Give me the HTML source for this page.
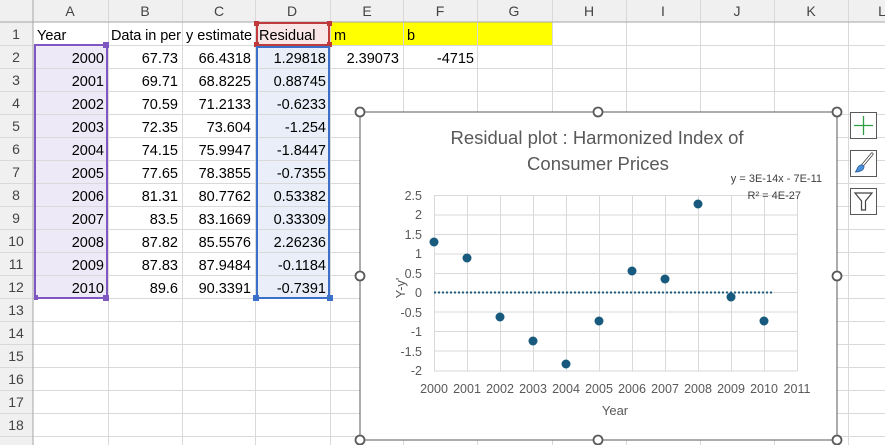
<!DOCTYPE html>
<html><head><meta charset="utf-8"><style>
html,body{margin:0;padding:0;background:#fff;overflow:hidden}
svg{display:block}
text{font-family:"Liberation Sans",Arial,sans-serif}
</style></head><body>
<svg width="885" height="445" xmlns="http://www.w3.org/2000/svg">
<rect width="885" height="445" fill="#fff"/>
<!-- header backgrounds -->
<rect x="0" y="0" width="885" height="22" fill="#f0f0f0"/>
<rect x="0" y="0" width="33" height="445" fill="#f0f0f0"/>
<!-- selection fills -->
<rect x="33" y="45" width="75" height="253" fill="#ede9f6"/>
<rect x="255" y="45" width="75" height="253" fill="#e9eef8"/>
<rect x="255" y="22" width="75" height="23" fill="#f9e6e6"/>
<rect x="330" y="22" width="222" height="23" fill="#ffff00"/>
<!-- grid -->
<g stroke="#d9d9d9" stroke-width="1">
<line x1="108.5" y1="0" x2="108.5" y2="445"/><line x1="182.5" y1="0" x2="182.5" y2="445"/>
<line x1="255.5" y1="0" x2="255.5" y2="445"/><line x1="330.5" y1="0" x2="330.5" y2="445"/>
<line x1="403.5" y1="0" x2="403.5" y2="445"/><line x1="477.5" y1="0" x2="477.5" y2="445"/>
<line x1="552.5" y1="0" x2="552.5" y2="445"/><line x1="626.5" y1="0" x2="626.5" y2="445"/>
<line x1="700.5" y1="0" x2="700.5" y2="445"/><line x1="774.5" y1="0" x2="774.5" y2="445"/>
<line x1="848.5" y1="0" x2="848.5" y2="445"/>
<line x1="0" y1="45.5" x2="885" y2="45.5"/><line x1="0" y1="68.5" x2="885" y2="68.5"/>
<line x1="0" y1="91.5" x2="885" y2="91.5"/><line x1="0" y1="114.5" x2="885" y2="114.5"/>
<line x1="0" y1="137.5" x2="885" y2="137.5"/><line x1="0" y1="160.5" x2="885" y2="160.5"/>
<line x1="0" y1="183.5" x2="885" y2="183.5"/><line x1="0" y1="206.5" x2="885" y2="206.5"/>
<line x1="0" y1="229.5" x2="885" y2="229.5"/><line x1="0" y1="252.5" x2="885" y2="252.5"/>
<line x1="0" y1="275.5" x2="885" y2="275.5"/><line x1="0" y1="298.5" x2="885" y2="298.5"/>
<line x1="0" y1="321.5" x2="885" y2="321.5"/><line x1="0" y1="344.5" x2="885" y2="344.5"/>
<line x1="0" y1="367.5" x2="885" y2="367.5"/><line x1="0" y1="390.5" x2="885" y2="390.5"/>
<line x1="0" y1="413.5" x2="885" y2="413.5"/><line x1="0" y1="436.5" x2="885" y2="436.5"/>
</g>
<line x1="0" y1="22" x2="885" y2="22" stroke="#a6a6a6"/>
<line x1="33" y1="0" x2="33" y2="445" stroke="#a6a6a6"/>
<!-- column header text -->
<g font-size="14" fill="#444" text-anchor="middle">
<text x="70" y="16">A</text><text x="145" y="16">B</text><text x="219" y="16">C</text>
<text x="292" y="16">D</text><text x="367" y="16">E</text><text x="440" y="16">F</text>
<text x="514" y="16">G</text><text x="589" y="16">H</text><text x="663" y="16">I</text>
<text x="737" y="16">J</text><text x="811" y="16">K</text><text x="882" y="16">L</text>
</g>
<g font-size="14" fill="#444" text-anchor="middle">
<text x="16" y="39">1</text><text x="16" y="62">2</text><text x="16" y="85">3</text>
<text x="16" y="108">4</text><text x="16" y="131">5</text><text x="16" y="154">6</text>
<text x="16" y="177">7</text><text x="16" y="200">8</text><text x="16" y="223">9</text>
<text x="16" y="246">10</text><text x="16" y="269">11</text><text x="16" y="292">12</text>
<text x="16" y="315">13</text><text x="16" y="338">14</text><text x="16" y="361">15</text>
<text x="16" y="384">16</text><text x="16" y="407">17</text><text x="16" y="430">18</text>
</g>
<!-- cells -->
<g font-size="14.5" fill="#000">
<text x="37" y="40">Year</text>
<text x="111" y="40" textLength="70">Data in per</text>
<text x="186" y="40">y estimate</text>
<text x="259" y="40">Residual</text>
<text x="334" y="40">m</text>
<text x="407" y="40">b</text>
</g>
<clipPath id="cb"><rect x="108" y="0" width="74" height="445"/></clipPath>
<g font-size="14.5" fill="#000" text-anchor="end">
<g><text x="104" y="63">2000</text><text x="104" y="86">2001</text><text x="104" y="109">2002</text><text x="104" y="132">2003</text><text x="104" y="155">2004</text><text x="104" y="178">2005</text><text x="104" y="201">2006</text><text x="104" y="224">2007</text><text x="104" y="247">2008</text><text x="104" y="270">2009</text><text x="104" y="293">2010</text></g>
<g><text x="178" y="63">67.73</text><text x="178" y="86">69.71</text><text x="178" y="109">70.59</text><text x="178" y="132">72.35</text><text x="178" y="155">74.15</text><text x="178" y="178">77.65</text><text x="178" y="201">81.31</text><text x="178" y="224">83.5</text><text x="178" y="247">87.82</text><text x="178" y="270">87.83</text><text x="178" y="293">89.6</text></g>
<g><text x="251" y="63">66.4318</text><text x="251" y="86">68.8225</text><text x="251" y="109">71.2133</text><text x="251" y="132">73.604</text><text x="251" y="155">75.9947</text><text x="251" y="178">78.3855</text><text x="251" y="201">80.7762</text><text x="251" y="224">83.1669</text><text x="251" y="247">85.5576</text><text x="251" y="270">87.9484</text><text x="251" y="293">90.3391</text></g>
<g><text x="326" y="63">1.29818</text><text x="326" y="86">0.88745</text><text x="326" y="109">-0.6233</text><text x="326" y="132">-1.254</text><text x="326" y="155">-1.8447</text><text x="326" y="178">-0.7355</text><text x="326" y="201">0.53382</text><text x="326" y="224">0.33309</text><text x="326" y="247">2.26236</text><text x="326" y="270">-0.1184</text><text x="326" y="293">-0.7391</text></g>
<text x="399" y="63">2.39073</text><text x="474" y="63">-4715</text>
</g>
<!-- selection borders -->
<rect x="35" y="45" width="72" height="253" fill="none" stroke="#7f56c2" stroke-width="2"/>
<rect x="103" y="42" width="6" height="6" fill="#7f56c2"/><rect x="103" y="295" width="6" height="6" fill="#7f56c2"/>
<rect x="34" y="295" width="4" height="5" fill="#7f56c2"/>
<rect x="257" y="23" width="72" height="22" fill="none" stroke="#c0393b" stroke-width="2"/>
<rect x="254" y="21" width="5" height="5" fill="#c0393b"/><rect x="327" y="21" width="5" height="5" fill="#c0393b"/>
<rect x="254" y="42" width="5" height="5" fill="#c0393b"/><rect x="327" y="42" width="5" height="5" fill="#c0393b"/>
<rect x="257" y="47" width="72" height="251" fill="none" stroke="#3b6fc9" stroke-width="2"/>
<rect x="253" y="295" width="6" height="6" fill="#3b6fc9"/><rect x="327" y="295" width="6" height="6" fill="#3b6fc9"/>
<!-- chart -->
<rect x="360" y="112" width="477" height="328" fill="#fff" stroke="#595959" stroke-width="1"/>
<g stroke="#d9d9d9">
<line x1="434" y1="195.5" x2="797" y2="195.5"/><line x1="434" y1="215" x2="797" y2="215"/>
<line x1="434" y1="234.5" x2="797" y2="234.5"/><line x1="434" y1="254" x2="797" y2="254"/>
<line x1="434" y1="273.5" x2="797" y2="273.5"/><line x1="434" y1="292.5" x2="797" y2="292.5"/>
<line x1="434" y1="312" x2="797" y2="312"/><line x1="434" y1="331.5" x2="797" y2="331.5"/>
<line x1="434" y1="351" x2="797" y2="351"/><line x1="434" y1="371" x2="797" y2="371"/>
<line x1="434.5" y1="195" x2="434.5" y2="371"/><line x1="467.5" y1="195" x2="467.5" y2="371"/>
<line x1="500.5" y1="195" x2="500.5" y2="371"/><line x1="533.5" y1="195" x2="533.5" y2="371"/>
<line x1="566.5" y1="195" x2="566.5" y2="371"/><line x1="599.5" y1="195" x2="599.5" y2="371"/>
<line x1="632.5" y1="195" x2="632.5" y2="371"/><line x1="665.5" y1="195" x2="665.5" y2="371"/>
<line x1="698.5" y1="195" x2="698.5" y2="371"/><line x1="731.5" y1="195" x2="731.5" y2="371"/>
<line x1="764.5" y1="195" x2="764.5" y2="371"/><line x1="797.5" y1="195" x2="797.5" y2="371"/>
</g>
<line x1="434" y1="292.5" x2="774" y2="292.5" stroke="#1f5c80" stroke-width="2" stroke-dasharray="2,2"/>
<g fill="#185a7d">
<circle cx="434" cy="242" r="4.5"/><circle cx="467" cy="258" r="4.5"/><circle cx="500" cy="317" r="4.5"/>
<circle cx="533" cy="341" r="4.5"/><circle cx="566" cy="364" r="4.5"/><circle cx="599" cy="321" r="4.5"/>
<circle cx="632" cy="271" r="4.5"/><circle cx="665" cy="279" r="4.5"/><circle cx="698" cy="204" r="4.5"/>
<circle cx="731" cy="297" r="4.5"/><circle cx="764" cy="321" r="4.5"/>
</g>
<g font-size="12.5" fill="#595959" text-anchor="end">
<text x="422" y="200">2.5</text><text x="422" y="219">2</text><text x="422" y="239">1.5</text>
<text x="422" y="258">1</text><text x="422" y="278">0.5</text><text x="422" y="297">0</text>
<text x="422" y="317">-0.5</text><text x="422" y="336">-1</text><text x="422" y="356">-1.5</text>
<text x="422" y="375">-2</text>
</g>
<g font-size="12.5" fill="#595959" text-anchor="middle">
<text x="434" y="393">2000</text><text x="467" y="393">2001</text><text x="500" y="393">2002</text>
<text x="533" y="393">2003</text><text x="566" y="393">2004</text><text x="599" y="393">2005</text>
<text x="632" y="393">2006</text><text x="665" y="393">2007</text><text x="698" y="393">2008</text>
<text x="731" y="393">2009</text><text x="764" y="393">2010</text><text x="797" y="393">2011</text>
<text x="615" y="415" font-size="13">Year</text>
<text transform="translate(405,288) rotate(-90)" font-size="13">Y-y'</text>
</g>
<g font-size="18.5" fill="#595959" text-anchor="middle">
<text x="597" y="144">Residual plot : Harmonized Index of</text>
<text x="598" y="170">Consumer Prices</text>
</g>
<g font-size="11" fill="#404040" text-anchor="end">
<text x="822" y="182">y = 3E-14x - 7E-11</text>
<text x="801" y="199">R² = 4E-27</text>
</g>
<!-- handles -->
<g fill="#fff" stroke="#595959" stroke-width="1.8">
<circle cx="360" cy="112" r="4.5"/><circle cx="598" cy="112" r="4.5"/><circle cx="837" cy="112" r="4.5"/>
<circle cx="360" cy="276" r="4.5"/><circle cx="837" cy="276" r="4.5"/>
<circle cx="360" cy="440" r="4.5"/><circle cx="598" cy="440" r="4.5"/><circle cx="837" cy="440" r="4.5"/>
</g>
<!-- side buttons -->
<g fill="#fff" stroke="#595959" stroke-width="1">
<rect x="850.5" y="112.5" width="26" height="26"/>
<rect x="850.5" y="150.5" width="26" height="26"/>
<rect x="850.5" y="188.5" width="26" height="26"/>
</g>
<path d="M863.5 116v19M854 125.5h19" stroke="#2e9e44" stroke-width="1.3"/>
<path d="M872 154l-10 12" stroke="#444" stroke-width="3" stroke-linecap="round"/>
<path d="M872 154l-10 12" stroke="#fff" stroke-width="1.4" stroke-linecap="round"/>
<path d="M859 166c2-2 5-1 5 1c0 3-4 5-9 5c2-1 2-5 4-6z" fill="#4a90d9" stroke="#2a5f9e" stroke-width="0.8"/>
<path d="M855 193h17l-6.5 8v9h-4v-9z" fill="none" stroke="#444" stroke-width="1.2"/>
</svg>
</body></html>
